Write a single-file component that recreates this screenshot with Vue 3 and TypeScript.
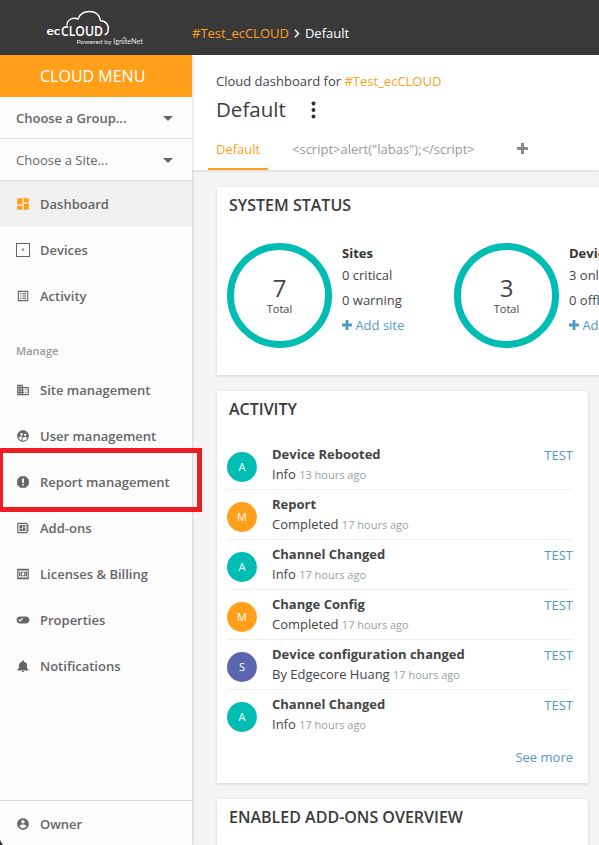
<script setup lang="ts">
interface NavItem {
  label: string
  icon: string
  active?: boolean
  highlighted?: boolean
}

interface StatusGroup {
  total: number
  title: string
  lines: string[]
  action: string
}

interface ActivityEntry {
  initial: string
  tone: 'teal' | 'orange' | 'indigo'
  title: string
  detail: string
  time: string
  link?: string
}

const icons: Record<string, string> = {
  dashboard: 'M2 13h9V2H2v11zm0 9h9v-7H2v7zm11 0h9V11h-9v11zm0-20v7h9V2h-9z',
  activity:
    'M19 5v14H5V5h14m1.1-2H3.9c-.5 0-.9.4-.9.9v16.2c0 .4.4.9.9.9h16.2c.4 0 .9-.5.9-.9V3.9c0-.5-.5-.9-.9-.9zM11 7h6v2h-6V7zm0 4h6v2h-6v-2zm0 4h6v2h-6zM7 7h2v2H7zm0 4h2v2H7zm0 4h2v2H7z',
  site: 'M12 7V3H2v18h20V7H12zM6 19H4v-2h2v2zm0-4H4v-2h2v2zm0-4H4V9h2v2zm0-4H4V5h2v2zm4 12H8v-2h2v2zm0-4H8v-2h2v2zm0-4H8V9h2v2zm0-4H8V5h2v2zm10 12h-8v-2h2v-2h-2v-2h2v-2h-2V9h8v10zm-2-8h-2v2h2v-2zm0 4h-2v2h2v-2z',
  user: 'M12 2C6.48 2 2 6.48 2 12s4.48 10 10 10 10-4.48 10-10S17.52 2 12 2zm3.61 6.34c1.07 0 1.93.86 1.93 1.93 0 1.07-.86 1.93-1.93 1.93-1.07 0-1.93-.86-1.93-1.93-.01-1.07.86-1.93 1.93-1.93zm-6-1.58c1.3 0 2.36 1.06 2.36 2.36 0 1.3-1.06 2.36-2.36 2.36s-2.36-1.06-2.36-2.36c0-1.31 1.05-2.36 2.36-2.36zm0 9.13v3.75c-2.4-.75-4.3-2.6-5.14-4.96 1.05-1.12 3.67-1.69 5.14-1.69.53 0 1.2.08 1.9.22-1.64.87-1.9 2.02-1.9 2.68zM12 20c-.27 0-.53-.01-.79-.04v-4.07c0-1.42 2.94-2.13 4.4-2.13 1.07 0 2.92.39 3.84 1.15C18.28 17.88 15.39 20 12 20z',
  report: 'M7.5 2h9L22 7.500v9L16.500 22h-9L2 16.500v-9zM10.500 6v7.500h3V6zm0 9.500V18h3v-2.500z',
  addons:
    'M22 9V7h-2V5c0-1.1-.9-2-2-2H4c-1.1 0-2 .9-2 2v14c0 1.1.9 2 2 2h14c1.1 0 2-.9 2-2v-2h2v-2h-2v-2h2v-2h-2V9h2zm-4 10H4V5h14v14zM6 13h5v4H6zm6-6h4v3h-4zM6 7h5v5H6zm6 4h4v6h-4z',
  license:
    'M2 3h20v18H2zM4 6v12h16V6zM5 8h2v8H5zm3 0h5v2h-3v4h3v2H8zm6 0h5v8h-5zm2 2v4h1v-4z',
  properties:
    'M17 6H7c-3.310 0-6 2.690-6 6s2.690 6 6 6h10c3.310 0 6-2.690 6-6s-2.690-6-6-6zM7 15l-3-3 1.400-1.400L7 12.200l4-4 1.400 1.400z',
  bell: 'M12 22.500c1.1 0 2-.9 2-2h-4c0 1.1.89 2 2 2zm7-6.500v-5c0-3.07-1.8-5.64-5.500-6.32V3.500c0-.83-.67-1.500-1.500-1.500s-1.500.67-1.500 1.500v1.180C6.800 5.360 5 7.920 5 11v5l-2.500 2v1.500h19V18L19 16z',
  account:
    'M12 2C6.48 2 2 6.48 2 12s4.48 10 10 10 10-4.48 10-10S17.52 2 12 2zm0 3c1.66 0 3 1.34 3 3s-1.340 3-3 3-3-1.340-3-3 1.340-3 3-3zm0 14.200c-2.500 0-4.710-1.280-6-3.220.03-1.990 4-3.080 6-3.080 1.990 0 5.970 1.090 6 3.080-1.290 1.940-3.500 3.220-6 3.220z',
}

const primaryNav: NavItem[] = [
  { label: 'Dashboard', icon: 'dashboard', active: true },
  { label: 'Devices', icon: 'devices' },
  { label: 'Activity', icon: 'activity' },
]

const manageNav: NavItem[] = [
  { label: 'Site management', icon: 'site' },
  { label: 'User management', icon: 'user' },
  { label: 'Report management', icon: 'report', highlighted: true },
  { label: 'Add-ons', icon: 'addons' },
  { label: 'Licenses & Billing', icon: 'license' },
  { label: 'Properties', icon: 'properties' },
  { label: 'Notifications', icon: 'bell' },
]

const statusGroups: StatusGroup[] = [
  { total: 7, title: 'Sites', lines: ['0 critical', '0 warning'], action: 'Add site' },
  { total: 3, title: 'Devices', lines: ['3 online', '0 offline'], action: 'Add device' },
]

const activity: ActivityEntry[] = [
  { initial: 'A', tone: 'teal', title: 'Device Rebooted', detail: 'Info', time: '13 hours ago', link: 'TEST' },
  { initial: 'M', tone: 'orange', title: 'Report', detail: 'Completed', time: '17 hours ago' },
  { initial: 'A', tone: 'teal', title: 'Channel Changed', detail: 'Info', time: '17 hours ago', link: 'TEST' },
  { initial: 'M', tone: 'orange', title: 'Change Config', detail: 'Completed', time: '17 hours ago', link: 'TEST' },
  { initial: 'S', tone: 'indigo', title: 'Device configuration changed', detail: 'By Edgecore Huang', time: '17 hours ago', link: 'TEST' },
  { initial: 'A', tone: 'teal', title: 'Channel Changed', detail: 'Info', time: '17 hours ago', link: 'TEST' },
]
</script>

<template>
  <div class="app">
    <header class="topbar">
      <div class="brand">
        <svg class="logo" width="110" height="44" viewBox="0 0 110 44">
          <path
            d="M26 20.500C26 14.500 31.500 12 37 14C39 8.500 43.500 6.500 48.500 6.500C55 6.500 58.500 10 59.500 15.500C65.500 16 68.500 21 67 26C66.500 28.500 65 29.500 63.500 29.500"
            fill="none"
            stroke="#fff"
            stroke-width="1.400"
          />
          <text x="5.500" y="30.300" class="logo-small" textLength="14" lengthAdjust="spacingAndGlyphs">ec</text>
          <text x="20" y="30.500" class="logo-big" textLength="42" lengthAdjust="spacingAndGlyphs">CLOUD</text>
          <text x="35.500" y="39.300" class="logo-tag" textLength="35" lengthAdjust="spacingAndGlyphs">Powered by</text>
          <text x="72.300" y="39.300" class="logo-tag name" textLength="29.500" lengthAdjust="spacingAndGlyphs">IgniteNet</text>
          <path d="M81.200 34l2.200-2 2.200 2" fill="none" stroke="#ddd" stroke-width=".8" />
        </svg>
      </div>
      <nav class="crumbs">
        <a class="accent">#Test_ecCLOUD</a>
        <svg width="6" height="9" viewBox="0 0 6 9"><path d="M1 .8l3.500 3.700L1 8.200" fill="none" stroke="#fff" stroke-width="1.500" /></svg>
        <span>Default</span>
      </nav>
    </header>

    <div class="body">
      <aside class="sidebar">
        <div class="menu-title">CLOUD MENU</div>
        <div class="select strong"><span>Choose a Group...</span><i class="caret"></i></div>
        <div class="select"><span>Choose a Site...</span><i class="caret"></i></div>
        <a v-for="item in primaryNav" :key="item.label" class="nav-item" :class="{ active: item.active }">
          <svg v-if="item.icon === 'devices'" class="icon wide" viewBox="0 0 14 14">
            <rect x=".5" y=".5" width="13" height="13" fill="none" stroke="currentColor" />
            <path d="M7 5l1.800 2H7.500v1.200h-1V7H5.200z" fill="currentColor" opacity=".8" />
          </svg>
          <svg v-else class="icon" viewBox="0 0 24 24"><path :d="icons[item.icon]" fill-rule="evenodd" /></svg>
          <span>{{ item.label }}</span>
        </a>
        <div class="section-label">Manage</div>
        <a v-for="item in manageNav" :key="item.label" class="nav-item">
          <svg class="icon" viewBox="0 0 24 24"><path :d="icons[item.icon]" fill-rule="evenodd" /></svg>
          <span>{{ item.label }}</span>
          <i v-if="item.highlighted" class="marker"></i>
        </a>
        <a class="nav-item owner">
          <svg class="icon" viewBox="0 0 24 24"><path :d="icons.account" fill-rule="evenodd" /></svg>
          <span>Owner</span>
        </a>
        <i class="corner"></i>
      </aside>

      <main class="main">
        <section class="page-head">
          <p class="context">Cloud dashboard for <a class="accent">#Test_ecCLOUD</a></p>
          <div class="title-row">
            <h1>Default</h1>
            <svg width="5" height="18" viewBox="0 0 5 18" fill="#333">
              <circle cx="2.500" cy="2.500" r="2" /><circle cx="2.500" cy="9" r="2" /><circle cx="2.500" cy="15.500" r="2" />
            </svg>
          </div>
          <div class="tabs">
            <a class="tab current">Default</a>
            <a class="tab second">&lt;script&gt;alert("labas");&lt;/script&gt;</a>
            <svg class="plus-tab" width="11" height="11" viewBox="0 0 11 11"><path d="M4 0h3v4h4v3H7v4H4V7H0V4h4z" fill="#888" /></svg>
          </div>
        </section>

        <div class="cards">
          <section class="card status">
            <h2>SYSTEM STATUS</h2>
            <div class="groups">
              <div v-for="group in statusGroups" :key="group.title" class="group">
                <div class="ring">
                  <span class="count">{{ group.total }}</span>
                  <span class="total">Total</span>
                </div>
                <div class="facts">
                  <b>{{ group.title }}</b>
                  <span v-for="line in group.lines" :key="line">{{ line }}</span>
                  <a class="link">
                    <svg width="10" height="10" viewBox="0 0 10 10"><path d="M3.600 0h2.800v3.600H10v2.800H6.400V10H3.600V6.400H0V3.600h3.600z" fill="currentColor" /></svg>
                    {{ group.action }}
                  </a>
                </div>
              </div>
            </div>
          </section>

          <section class="card activity">
            <h2>ACTIVITY</h2>
            <ul>
              <li v-for="(entry, index) in activity" :key="index">
                <span class="avatar" :class="entry.tone">{{ entry.initial }}</span>
                <div class="entry">
                  <b>{{ entry.title }}</b>
                  <p>{{ entry.detail }} <small>{{ entry.time }}</small></p>
                </div>
                <a v-if="entry.link" class="link">{{ entry.link }}</a>
              </li>
            </ul>
            <a class="link more">See more</a>
          </section>

          <section class="card addons">
            <h2>ENABLED ADD-ONS OVERVIEW</h2>
          </section>
        </div>
      </main>
    </div>
  </div>
</template>

<style>
body {
  background: #f4f4f4;
  overflow: hidden;
}
</style>

<style scoped>
* {
  box-sizing: border-box;
}
h1,
h2,
p,
ul {
  margin: 0;
  padding: 0;
}
.app {
  display: flex;
  flex-direction: column;
  width: 599px;
  height: 845px;
  overflow: hidden;
  background: #f4f4f4;
  color: #444;
  font: 13px/20px 'Open Sans', 'Noto Sans', sans-serif;
}
.accent {
  color: #ff9f1a;
}
.link {
  color: #519ac4;
}
.topbar {
  display: flex;
  flex: none;
  height: 55px;
  background: #393939;
  color: #fff;
}
.brand {
  width: 192px;
  padding: 5px 0 0 41px;
}
.logo {
  display: block;
  fill: #fff;
}
.logo-small {
  font: 700 12px Lato, sans-serif;
}
.logo-big {
  font: 600 13.500px 'Open Sans', sans-serif;
}
.logo-tag {
  fill: #e4e4e4;
  font: 400 6.300px Lato, sans-serif;
}
.logo-tag.name {
  font-size: 7px;
}
.crumbs {
  display: flex;
  align-items: center;
  gap: 5px;
  padding-top: 11px;
}
.crumbs svg {
  margin-top: 1px;
}
.body {
  display: flex;
  flex: 1;
  min-height: 0;
}
.sidebar {
  position: relative;
  z-index: 2;
  display: flex;
  flex: none;
  flex-direction: column;
  width: 192px;
  background: #fcfcfc;
  box-shadow: 1px 0 2px rgba(0, 0, 0, 0.14);
  color: #666;
}
.menu-title {
  height: 42px;
  background: #ff9f1a;
  color: #fff;
  font-size: 16px;
  line-height: 42px;
  padding-left: 40px;
}
.select {
  display: flex;
  align-items: center;
  justify-content: space-between;
  height: 42px;
  padding: 0 19px 0 16px;
  border-bottom: 1px solid #e0e0e0;
}
.strong {
  font-weight: 600;
}
.caret {
  margin-top: 1px;
  border: 5px solid transparent;
  border-top-color: #666;
  border-bottom: 0;
}
.nav-item {
  position: relative;
  display: flex;
  flex: none;
  align-items: center;
  height: 46px;
  padding-left: 16px;
  font-weight: 600;
}
.nav-item.active {
  background: #f0f0f0;
}
.icon {
  width: 14px;
  height: 14px;
  margin-right: 10px;
  fill: currentColor;
}
.active .icon {
  color: #ff9f1a;
}
.section-label {
  height: 48px;
  padding: 22px 0 0 16px;
  color: #999;
  font-size: 11px;
  font-weight: 600;
}
.marker {
  position: absolute;
  top: -11px;
  left: -2px;
  width: 204px;
  height: 64px;
  border: 5px solid #ee1c25;
}
.owner {
  height: 45px;
  margin-top: auto;
  border-top: 1px solid #d8d8d8;
  padding-top: 2px;
}
.corner {
  position: absolute;
  bottom: 0;
  left: 0;
  border-bottom: 5px solid #333;
  border-right: 3px solid transparent;
}
.main {
  flex: 1;
  min-width: 0;
}
.page-head {
  height: 115px;
  padding: 16px 0 0 24px;
  background: #fff;
  box-shadow: 0 1px 2px rgba(0, 0, 0, 0.12);
}
.title-row {
  display: flex;
  align-items: center;
  gap: 25px;
  height: 37px;
}
.title-row svg {
  margin-top: 1px;
}
h1 {
  margin-top: -1px;
  color: #3c3c3c;
  font-size: 20.500px;
  font-weight: 400;
}
.tabs {
  display: flex;
  align-items: center;
  height: 42px;
  margin-left: -8px;
}
.tab {
  height: 42px;
  line-height: 42px;
  color: #999;
}
.current {
  width: 60px;
  padding-left: 8px;
  border-bottom: 2px solid #ff9f1a;
  color: #ff9f1a;
}
.second {
  margin: 0 42px 0 24px;
}
.plus-tab {
  margin-top: -1px;
}
.cards {
  display: flex;
  flex-direction: column;
  gap: 16px;
  padding: 17px 0 0 25px;
}
.card {
  flex: none;
  width: 371px;
  padding-left: 12px;
  background: #fff;
  box-shadow: 0 1px 3px rgba(0, 0, 0, 0.14);
}
h2 {
  padding-top: 8px;
  color: #3a3a3a;
  font-size: 16px;
  font-weight: 600;
  line-height: 20px;
}
.status {
  width: 500px;
  height: 188px;
}
.groups {
  display: flex;
  margin: 28px 0 0 -2px;
}
.group {
  display: flex;
  flex: none;
  gap: 10px;
  width: 227px;
}
.ring {
  display: flex;
  flex-direction: column;
  align-items: center;
  width: 105px;
  height: 105px;
  padding-top: 27px;
  border: 7px solid #00bdb4;
  border-radius: 50%;
}
.count {
  font-size: 24px;
  line-height: 22px;
}
.total {
  font-size: 11px;
  line-height: 20px;
}
.facts {
  display: flex;
  flex-direction: column;
  padding-top: 1px;
  white-space: nowrap;
  line-height: 25px;
}
.facts b {
  color: #333;
  line-height: 19px;
}
.activity {
  height: 392px;
}
.activity ul {
  margin: 21px 15px 0 -2px;
  list-style: none;
}
.activity li {
  display: flex;
  height: 50px;
  padding-top: 4px;
  border-bottom: 1px solid #eee;
}
.activity li:last-child {
  border-color: transparent;
}
.avatar {
  width: 30px;
  height: 30px;
  margin: 8px 15px 0 0;
  border-radius: 50%;
  color: #fff;
  font-size: 11px;
  line-height: 30px;
  text-align: center;
}
.teal {
  background: #00bdb4;
}
.orange {
  background: #ff9f1a;
}
.indigo {
  background: #5c66ae;
}
.entry {
  flex: 1;
}
.entry b {
  display: block;
}
small {
  color: #999fa3;
  font-size: 11px;
}
li .link {
  margin-top: 1px;
}
.more {
  display: block;
  margin: 7px 15px 0 0;
  text-align: right;
}
.addons {
  height: 80px;
}
</style>
